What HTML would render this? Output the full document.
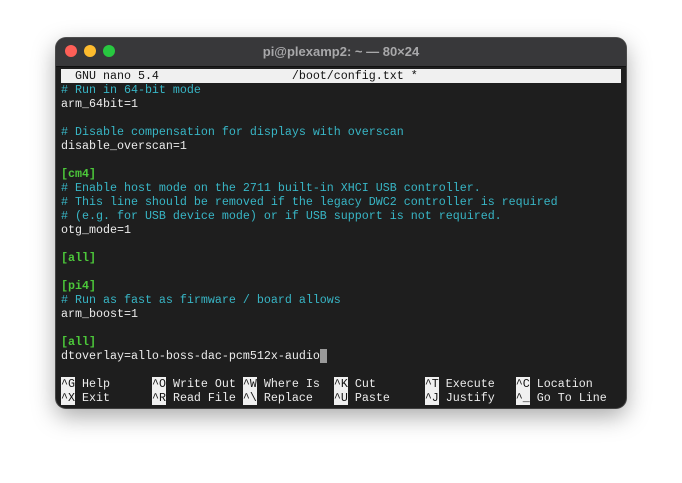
<!DOCTYPE html><html><head><style>
body{margin:0;width:682px;height:483px;background:#fff;overflow:hidden;position:relative}
.win{position:absolute;left:56px;top:38px;width:570px;height:370px;border-radius:10px;background:#1e1e1e;box-shadow:0 8px 24px rgba(0,0,0,.35),0 0 0 1px #555;overflow:hidden}
.tb{height:28px;background:#38383a;border-bottom:1px solid #111;position:relative}
.tb .t{position:absolute;left:0;right:0;top:6px;text-align:center;color:#a8a8aa;font:bold 13px "Liberation Sans",sans-serif}
.d{position:absolute;top:7px;width:12px;height:12px;border-radius:6px}
pre{position:absolute;left:5px;top:31px;margin:0;font:11.67px/14px "Liberation Mono",monospace;color:#ececec}
.h{background:#f0f0f0;color:#111;display:inline-block;width:560px}
.c{color:#38b6c6}.g{color:#4cc83a;font-weight:bold}
.k{background:#f0f0f0;color:#111}
.cur{background:#9a9a9a}
</style></head><body><div class="win"><div class="tb">
<div class="d" style="left:9px;background:#fe5f57"></div><div class="d" style="left:28px;background:#febc2e"></div><div class="d" style="left:47px;background:#28c840"></div>
<div class="t">pi@plexamp2: ~ — 80×24</div></div>
<pre><span class="h">  GNU nano 5.4                   /boot/config.txt *                             </span>
<span class="c"># Run in 64-bit mode</span>
arm_64bit=1

<span class="c"># Disable compensation for displays with overscan</span>
disable_overscan=1

<span class="g">[cm4]</span>
<span class="c"># Enable host mode on the 2711 built-in XHCI USB controller.</span>
<span class="c"># This line should be removed if the legacy DWC2 controller is required</span>
<span class="c"># (e.g. for USB device mode) or if USB support is not required.</span>
otg_mode=1

<span class="g">[all]</span>

<span class="g">[pi4]</span>
<span class="c"># Run as fast as firmware / board allows</span>
arm_boost=1

<span class="g">[all]</span>
dtoverlay=allo-boss-dac-pcm512x-audio<span class="cur"> </span>

<span class="k">^G</span> Help      <span class="k">^O</span> Write Out <span class="k">^W</span> Where Is  <span class="k">^K</span> Cut       <span class="k">^T</span> Execute   <span class="k">^C</span> Location
<span class="k">^X</span> Exit      <span class="k">^R</span> Read File <span class="k">^\</span> Replace   <span class="k">^U</span> Paste     <span class="k">^J</span> Justify   <span class="k">^_</span> Go To Line</pre>
</div></body></html>
